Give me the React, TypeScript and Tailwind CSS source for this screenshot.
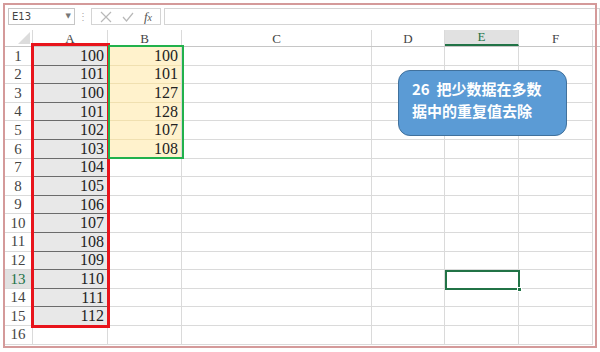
import React from "react";

const cols = [
  { k: "A", w: 75 },
  { k: "B", w: 74 },
  { k: "C", w: 190 },
  { k: "D", w: 73 },
  { k: "E", w: 74 },
  { k: "F", w: 74 },
];

const aVals = [100, 101, 100, 101, 102, 103, 104, 105, 106, 107, 108, 109, 110, 111, 112, null];
const bVals = [100, 101, 127, 128, 107, 108];

export default function App() {
  return (
    <div className="w-[600px] h-[352px] bg-white relative overflow-hidden" style={{ fontFamily: '"Liberation Serif", "Noto Sans CJK SC", serif' }}>
      <div className="absolute left-[3px] top-[3px] w-[594px] h-[345px] border-2 border-[#d49a9a] pointer-events-none z-30" />
      <div className="pt-[8px] pl-[8px] flex items-center h-[25px] gap-0">
        <div className="w-[67px] h-[17px] border border-[#c6c6c6] flex items-center justify-between px-[3px] text-[10px] text-[#444]" style={{ fontFamily: '"DejaVu Sans", sans-serif' }}>
          <span>E13</span>
          <span className="text-[7px] text-[#777]">▼</span>
        </div>
        <div className="w-[16px] text-center text-[#aaa] text-[10px] leading-none">⋮</div>
        <div className="w-[70px] h-[17px] border border-[#d4d4d4] flex items-center justify-around px-[3px]">
          <svg width="12" height="12" viewBox="0 0 12 12"><path d="M1 1 L11 11 M11 1 L1 11" stroke="#b8b8b8" strokeWidth="1.2" fill="none" /></svg>
          <svg width="12" height="12" viewBox="0 0 12 12"><path d="M1 6 L4.5 10 L11 2" stroke="#b8b8b8" strokeWidth="1.2" fill="none" /></svg>
          <span className="italic text-[13px] text-[#555]">f<span className="text-[10px]">x</span></span>
        </div>
        <div className="ml-[3px] flex-1 h-[17px] border border-[#d4d4d4]" />
      </div>
      <div className="mt-[5px] ml-[4px] relative">
        {/* header row */}
        <div className="flex h-[17px] border-b border-[#c6c6c6]">
          <div className="w-[29px] relative border-r border-[#dadada]">
            <div className="absolute right-[2px] bottom-[2px] w-0 h-0 border-l-[12px] border-l-transparent border-b-[12px] border-b-[#dcdcdc]" />
          </div>
          {cols.map((c) => (
            <div
              key={c.k}
              style={{ width: c.w }}
              className={`flex items-end justify-center text-[13px] leading-[15px] border-r border-[#dadada] ${c.k === "E" ? "bg-[#e1e1e1] text-[#217346] border-b-2 border-b-[#217346]" : "text-[#444]"}`}
            >
              {c.k}
            </div>
          ))}
        </div>
        {aVals.map((a, i) => (
          <div key={i} className="flex h-[18.6px]">
            <div className={`w-[29px] flex items-center justify-center text-[15px] border-r border-b border-[#dadada] ${i === 12 ? "bg-[#e1e1e1] text-[#217346]" : "text-[#444]"}`}>
              {i + 1}
            </div>
            <div className={`w-[75px] flex items-center justify-end pr-[3px] text-[16px] text-[#222] border-r ${a !== null ? "bg-[#e8e8e8] border-b border-b-[#6b6b6b] border-r-[#9a9a9a]" : "border-b border-[#dadada]"}`}>
              {a}
            </div>
            <div className={`w-[74px] flex items-center justify-end pr-[3px] text-[16px] text-[#222] border-r border-b border-[#dadada] ${i < 6 ? "bg-[#fff2cc] border-b-[#f0e0b0]" : ""}`}>
              {i < 6 ? bVals[i] : null}
            </div>
            <div className="w-[190px] border-r border-b border-[#dadada]" />
            <div className="w-[73px] border-r border-b border-[#dadada]" />
            <div className="w-[74px] border-r border-b border-[#dadada]" />
            <div className="w-[74px] border-r border-b border-[#dadada]" />
          </div>
        ))}
        {/* red box around A */}
        <div className="absolute left-[27px] top-[13px] w-[79px] h-[285px] border-[3px] border-[#e8141c] z-10" />
        {/* green box around B1:B6 */}
        <div className="absolute left-[104px] top-[15px] w-[76px] h-[114px] border-[2px] border-[#22b14c] z-10" />
        {/* selection E13 */}
        <div className="absolute left-[441px] top-[240px] w-[75px] h-[20px] border-[2px] border-[#217346] z-10">
          <div className="absolute right-[-4px] bottom-[-4px] w-[5px] h-[5px] bg-[#217346] border border-white" />
        </div>
        {/* callout */}
        <div
          className="absolute left-[394px] top-[40px] w-[169px] h-[66px] rounded-[12px] bg-[#5b9bd5] border border-[#41719c] z-20 px-[13px] pt-[7px] text-white font-bold text-[15px] leading-[22px]"
          style={{ fontFamily: '"Noto Sans CJK SC", "Liberation Sans", sans-serif' }}
        >
          <div>26&nbsp;&nbsp;把少数据在多数</div>
          <div>据中的重复值去除</div>
        </div>
      </div>
    </div>
  );
}
